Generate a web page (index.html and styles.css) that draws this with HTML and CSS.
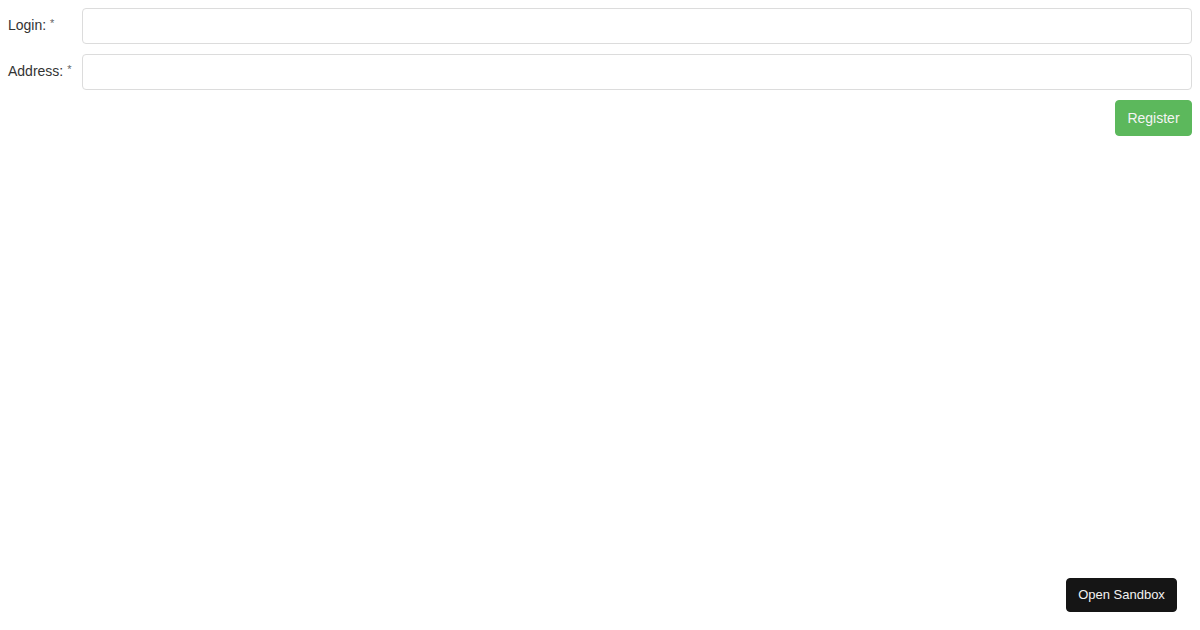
FILE: index.html
```html
<!DOCTYPE html>
<html>
<head>
<meta charset="utf-8">
<link rel="stylesheet" href="styles.css">
</head>
<body>
<form class="form">
  <div class="row">
    <label class="label">Login: <span class="req">*</span></label>
    <input class="input" type="text">
  </div>
  <div class="row">
    <label class="label">Address: <span class="req">*</span></label>
    <input class="input" type="text">
  </div>
  <div class="actions">
    <button type="button" class="btn-register">Register</button>
  </div>
</form>
<button type="button" class="btn-sandbox">Open Sandbox</button>
</body>
</html>
```
FILE: styles.css
```css
html, body {
  margin: 0;
  padding: 0;
  background: #fff;
}
body {
  padding: 8px;
  font-family: "Liberation Sans", Arial, sans-serif;
  font-size: 14px;
  color: #333;
  height: 630px;
  box-sizing: border-box;
}
.form {
  display: flex;
  flex-direction: column;
  gap: 10px;
}
.row {
  display: flex;
  align-items: center;
}
.label {
  width: 74px;
  flex: none;
  font-size: 14px;
  line-height: 20px;
  padding-bottom: 2px;
  color: #333;
}
.req {
  font-size: 11px;
  color: #666;
  vertical-align: top;
  position: relative;
  top: -2px;
}
.input {
  flex: 1;
  height: 36px;
  box-sizing: border-box;
  border: 1px solid #dcdcdc;
  border-radius: 4px;
  background: #fff;
  margin: 0;
  padding: 6px 12px;
  font-family: inherit;
  font-size: 14px;
}
.actions {
  display: flex;
  justify-content: flex-end;
}
.btn-register {
  width: 77px;
  height: 36px;
  background: #5cb85c;
  border: 1px solid #5cb85c;
  border-radius: 4px;
  color: #f4f4f4;
  font-family: inherit;
  font-size: 14px;
  padding: 0 0 1px;
}
.btn-sandbox {
  position: fixed;
  left: 1066px;
  top: 578px;
  width: 111px;
  height: 34px;
  background: #151515;
  border: 1px solid #151515;
  border-radius: 4px;
  color: #f2f2f2;
  font-family: inherit;
  font-size: 13px;
  padding: 0 0 2px;
}
```
